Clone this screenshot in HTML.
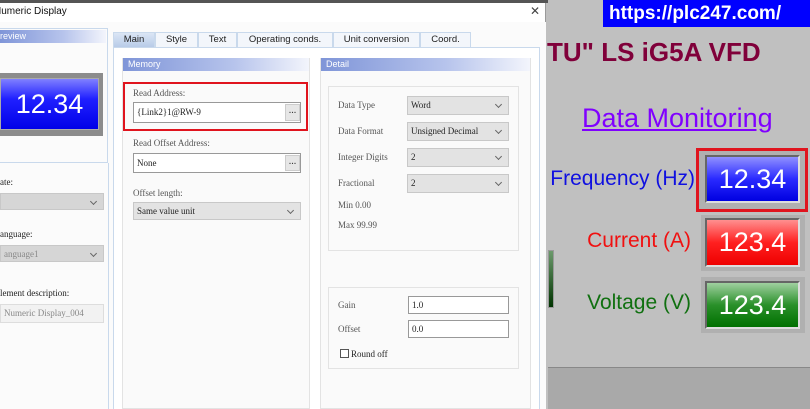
<!DOCTYPE html>
<html><head><style>
*{margin:0;padding:0;box-sizing:border-box}
body{width:810px;height:409px;overflow:hidden;position:relative;background:#c0c0c0;font-family:"Liberation Serif",serif;font-size:9px;color:#333}
.a{position:absolute}
.s{font-family:"Liberation Sans",sans-serif}
.hdr{background:linear-gradient(to right,#7f95d8,#b7c4ec 60%,#f3f5fc);color:#fff;font-family:"Liberation Sans",sans-serif;font-size:9px;padding-left:5px;line-height:13px}
.sel{background:#e3e3e3;border:1px solid #c8c8c8;font-size:9px;line-height:16px;padding-left:3px;color:#222}
.sel:after{content:"";position:absolute;right:7px;top:5px;width:4px;height:4px;border-right:1px solid #666;border-bottom:1px solid #666;transform:rotate(45deg)}
.inp{background:#fff;border:1px solid #999;font-size:9px;padding-left:3px;color:#222}
.tab{top:32px;height:15px;border:1px solid #c9d9ec;border-bottom:none;background:#f3f6fb;font-family:"Liberation Sans",sans-serif;font-size:9.5px;text-align:center;line-height:14px;color:#222}
.lbl{color:#555;font-size:9px}
.disp{border:2px solid #666;border-right-color:#ddd;border-bottom-color:#ddd;color:#fff;font-family:"Liberation Sans",sans-serif;font-size:27px;text-align:center}
</style></head><body>
<div class="a" style="left:0;top:0;width:548px;height:3px;background:#555"></div>
<div class="a" style="left:548px;top:367px;width:262px;height:42px;background:#a9a9a9;border-top:1px solid #888"></div>
<!-- dialog -->
<div class="a" style="left:0;top:3px;width:546px;height:406px;background:#fff;border-right:1px solid #9a9a9a"></div>
<div class="a s" style="left:-6px;top:6px;font-size:10px;color:#111">Numeric Display</div>
<div class="a s" style="left:530px;top:4px;font-size:12px;color:#444">✕</div>
<div class="a" style="left:0;top:22px;width:546px;height:387px;background:#fbfbfb"></div>
<!-- left panel -->
<div class="a" style="left:0;top:28px;width:108px;height:135px;border:1px solid #c9d9ec;border-left:none;background:#fbfbfb"></div>
<div class="a hdr" style="left:0;top:30px;width:106px;padding-left:0">review</div>
<div class="a" style="left:0;top:73px;width:103px;height:63px;background:#8c8c8c"></div>
<div class="a disp" style="left:0;top:78px;width:99px;height:52px;border:1px solid #aaa;background:linear-gradient(#8080ff,#2020ff 40%,#0000e8);line-height:50px;font-size:27px">12.34</div>
<div class="a" style="left:108px;top:163px;width:1px;height:246px;background:#c9d9ec"></div>
<div class="a lbl" style="left:0;top:177px;color:#222">ate:</div>
<div class="a sel" style="left:0;top:193px;width:104px;height:17px;background:#d6d6d6"></div>
<div class="a lbl" style="left:0;top:229px;color:#222">anguage:</div>
<div class="a sel" style="left:0;top:245px;width:104px;height:17px;background:#d6d6d6;color:#888">anguage1</div>
<div class="a lbl" style="left:0;top:288px;color:#222">lement description:</div>
<div class="a inp" style="left:0;top:304px;width:104px;height:19px;background:#f2f2f2;border-color:#ddd;color:#888;line-height:17px">Numeric Display_004</div>
<!-- tabs -->
<div class="a tab" style="left:113px;width:42px;background:linear-gradient(#dbe6f5,#b8cbe8)">Main</div>
<div class="a tab" style="left:155px;width:43px">Style</div>
<div class="a tab" style="left:198px;width:39px">Text</div>
<div class="a tab" style="left:237px;width:96px">Operating conds.</div>
<div class="a tab" style="left:333px;width:87px">Unit conversion</div>
<div class="a tab" style="left:420px;width:51px">Coord.</div>
<div class="a" style="left:113px;top:47px;width:427px;height:362px;border:1px solid #c9d9ec;border-bottom:none;background:#fff"></div>
<!-- memory -->
<div class="a" style="left:122px;top:58px;width:188px;height:351px;border:1px solid #e3e3e3;background:#fafafa"></div>
<div class="a hdr" style="left:123px;top:58px;width:186px">Memory</div>
<div class="a" style="left:123px;top:82px;width:185px;height:49px;border:2px solid #e0141e"></div>
<div class="a lbl" style="left:133px;top:88px">Read Address:</div>
<div class="a inp" style="left:133px;top:102px;width:168px;height:21px;line-height:19px">{Link2}1@RW-9</div>
<div class="a" style="left:285px;top:104px;width:15px;height:17px;background:#e6e6e6;border:1px solid #ccc;text-align:center;font-size:10px;line-height:12px">...</div>
<div class="a lbl" style="left:133px;top:138px">Read Offset Address:</div>
<div class="a inp" style="left:133px;top:153px;width:168px;height:20px;line-height:18px">None</div>
<div class="a" style="left:285px;top:155px;width:15px;height:16px;background:#e6e6e6;border:1px solid #ccc;text-align:center;font-size:10px;line-height:11px">...</div>
<div class="a lbl" style="left:133px;top:188px">Offset length:</div>
<div class="a sel" style="left:133px;top:202px;width:168px;height:18px">Same value unit</div>
<!-- detail -->
<div class="a" style="left:320px;top:58px;width:211px;height:351px;border:1px solid #e3e3e3;background:#fafafa"></div>
<div class="a hdr" style="left:321px;top:58px;width:209px">Detail</div>
<div class="a" style="left:328px;top:86px;width:191px;height:165px;border:1px solid #e3e3e3"></div>
<div class="a lbl" style="left:338px;top:100px">Data Type</div>
<div class="a sel" style="left:407px;top:96px;width:102px;height:19px">Word</div>
<div class="a lbl" style="left:338px;top:126px">Data Format</div>
<div class="a sel" style="left:407px;top:122px;width:102px;height:19px">Unsigned Decimal</div>
<div class="a lbl" style="left:338px;top:152px">Integer Digits</div>
<div class="a sel" style="left:407px;top:148px;width:102px;height:19px">2</div>
<div class="a lbl" style="left:338px;top:178px">Fractional</div>
<div class="a sel" style="left:407px;top:174px;width:102px;height:19px">2</div>
<div class="a lbl" style="left:338px;top:200px">Min 0.00</div>
<div class="a lbl" style="left:338px;top:220px">Max 99.99</div>
<div class="a" style="left:328px;top:287px;width:191px;height:82px;border:1px solid #e3e3e3"></div>
<div class="a lbl" style="left:338px;top:300px">Gain</div>
<div class="a inp" style="left:408px;top:296px;width:101px;height:18px;line-height:16px">1.0</div>
<div class="a lbl" style="left:338px;top:324px">Offset</div>
<div class="a inp" style="left:408px;top:320px;width:101px;height:18px;line-height:16px">0.0</div>
<div class="a" style="left:340px;top:349px;width:9px;height:9px;border:1px solid #555;background:#fff"></div>
<div class="a lbl" style="left:351px;top:349px;color:#222">Round off</div>
<!-- right HMI -->
<div class="a s" style="left:603px;top:0;width:207px;height:27px;background:#0000ff;color:#fff;font-weight:bold;font-size:19px;line-height:27px;padding-left:6px">https://plc247.com/</div>
<div class="a s" style="left:547px;top:37px;font-size:26px;font-weight:bold;color:#80003a;white-space:nowrap">TU" LS iG5A VFD</div>
<div class="a s" style="left:582px;top:103px;font-size:27px;color:#8000ff;text-decoration:underline;white-space:nowrap">Data Monitoring</div>
<div class="a" style="left:548px;top:250px;width:6px;height:58px;background:linear-gradient(#6c9a6c,#003300);border:1px solid #999"></div>
<div class="a s" style="left:500px;top:167px;width:195px;text-align:right;font-size:21px;color:#1010e0">Frequency (Hz)</div>
<div class="a s" style="left:500px;top:229px;width:191px;text-align:right;font-size:21px;color:#f01010">Current (A)</div>
<div class="a s" style="left:500px;top:291px;width:191px;text-align:right;font-size:21px;color:#107010">Voltage (V)</div>
<div class="a" style="left:696px;top:148px;width:112px;height:64px;border:3px solid #e0141e;background:#b0b0b0"></div>
<div class="a disp" style="left:705px;top:155px;width:95px;height:48px;background:linear-gradient(#9090ff,#2a2aff 50%,#0000e0);line-height:44px">12.34</div>
<div class="a" style="left:701px;top:215px;width:104px;height:56px;background:#b0b0b0"></div>
<div class="a disp" style="left:705px;top:218px;width:95px;height:49px;background:linear-gradient(#ff9090,#ff2020 50%,#ee0000);line-height:45px">123.4</div>
<div class="a" style="left:701px;top:277px;width:104px;height:56px;background:#b0b0b0"></div>
<div class="a disp" style="left:705px;top:281px;width:95px;height:48px;background:linear-gradient(#a0d0a0,#2a902a 50%,#007000);line-height:44px">123.4</div>
</body></html>
